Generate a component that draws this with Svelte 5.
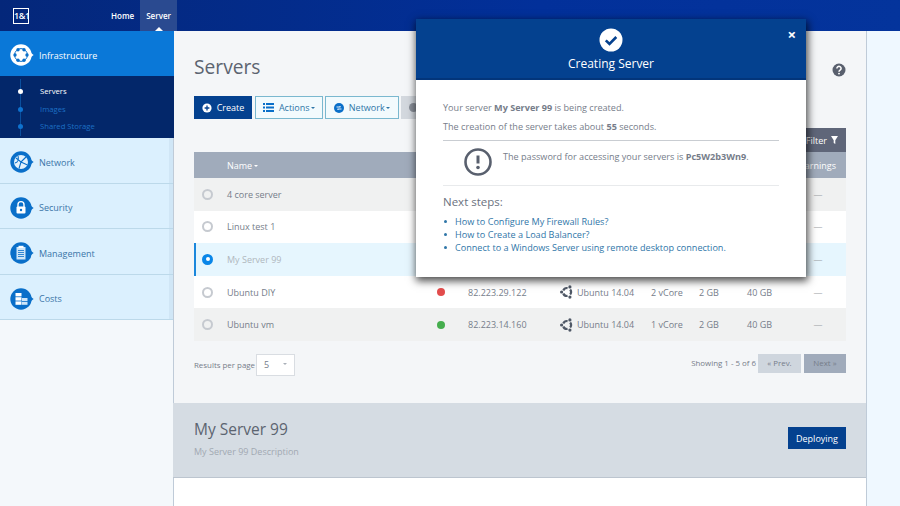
<script lang="ts">
  const navItems = [
    { label: "Network", icon: "network" },
    { label: "Security", icon: "lock" },
    { label: "Management", icon: "clip" },
    { label: "Costs", icon: "costs" },
  ];

  const subItems = [
    { label: "Servers", active: true },
    { label: "Images", active: false },
    { label: "Shared Storage", active: false },
  ];

  const rows = [
    { name: "4 core server", dot: "", ip: "", os: "", cores: "", ram: "", disk: "", state: "" },
    { name: "Linux test 1", dot: "", ip: "", os: "", cores: "", ram: "", disk: "", state: "" },
    { name: "My Server 99", dot: "", ip: "", os: "", cores: "", ram: "", disk: "", state: "selected" },
    { name: "Ubuntu DIY", dot: "red", ip: "82.223.29.122", os: "Ubuntu 14.04", cores: "2 vCore", ram: "2 GB", disk: "40 GB", state: "" },
    { name: "Ubuntu vm", dot: "green", ip: "82.223.14.160", os: "Ubuntu 14.04", cores: "1 vCore", ram: "2 GB", disk: "40 GB", state: "" },
  ];

  const steps = [
    "How to Configure My Firewall Rules?",
    "How to Create a Load Balancer?",
    "Connect to a Windows Server using remote desktop connection.",
  ];
</script>

{#snippet badge(kind: string, active: boolean)}
  <svg class="badge" width="27" height="24" viewBox="0 0 27 24">
    <circle cx="12" cy="12" r="10.7" fill={active ? "#fff" : "#0a6fc9"} />
    <path d="M22 10l2.600 2-2.600 2z" fill={active ? "#fff" : "#0a6fc9"} />
    {#if kind === "infra"}
      <circle cx="12" cy="12" r="6.400" fill="none" stroke="#0a6fc9" stroke-width="1" />
      <g fill="#0a6fc9">
        <circle cx="9" cy="6.800" r="1.700" /><circle cx="15" cy="6.800" r="1.700" />
        <circle cx="6" cy="12" r="1.700" /><circle cx="18" cy="12" r="1.700" />
        <circle cx="9" cy="17.200" r="1.700" /><circle cx="15" cy="17.200" r="1.700" />
      </g>
    {:else if kind === "network"}
      <circle cx="12" cy="12" r="7" fill="#e4f2fc" />
      <path d="M7 8l5 4 5-5M12 12l-2 6.500M12 12l6.500 3M6 13c3-1 4-4 3-7" fill="none" stroke="#0a6fc9" stroke-width="1.100" />
    {:else if kind === "lock"}
      <path d="M9 11V8.600a3 3 0 0 1 6 0V11" fill="none" stroke="#fff" stroke-width="1.400" />
      <rect x="7.500" y="10.500" width="9" height="7" rx="1" fill="#fff" />
      <circle cx="12" cy="14" r="1.200" fill="#0a6fc9" />
    {:else if kind === "clip"}
      <rect x="7.500" y="6" width="9" height="12.500" fill="#cfe6f8" />
      <rect x="9.500" y="4.800" width="5" height="2.200" fill="#fff" />
      <path d="M9 9.500h6M9 11.500h6M9 13.500h6M9 15.500h6" stroke="#0a6fc9" stroke-width=".8" />
    {:else}
      <rect x="6.500" y="6" width="6" height="3.400" fill="#fff" />
      <rect x="6.500" y="10.200" width="6" height="3.400" fill="#fff" />
      <rect x="6.500" y="14.400" width="6" height="3.400" fill="#fff" />
      <rect x="13" y="11" width="5.500" height="3" fill="#cfe6f8" />
      <rect x="13" y="14.800" width="5.500" height="3" fill="#cfe6f8" />
    {/if}
  </svg>
{/snippet}

{#snippet ubuntu()}
  <svg class="ubuntu" width="13" height="14" viewBox="0 0 13 14">
    <path d="M7.560 10.960A4 4 0 0 1 3.290 8.500M3.290 5.500A4 4 0 0 1 7.560 3.040M10.150 4.540A4 4 0 0 1 10.150 9.460" fill="none" stroke="#4f5866" stroke-width="2.200" />
    <circle cx="1.600" cy="7" r="1.600" fill="#4f5866" />
    <circle cx="9.900" cy="1.900" r="1.600" fill="#4f5866" />
    <circle cx="9.900" cy="12.100" r="1.600" fill="#4f5866" />
  </svg>
{/snippet}

<div class="page">
  <header class="topbar">
    <div class="logo-col">
      <div class="logo">1&amp;1</div>
      <nav class="topnav">
        <span class="toplink">Home</span>
        <span class="toplink current">Server</span>
      </nav>
    </div>
  </header>

  <div class="body">
    <aside class="sidebar">
      <div class="nav-active">
        {@render badge("infra", true)}
        <span>Infrastructure</span>
      </div>
      <ul class="subnav">
        {#each subItems as item}
          <li class:active={item.active}>{item.label}</li>
        {/each}
      </ul>
      {#each navItems as item}
        <div class="nav-item">
          {@render badge(item.icon, false)}
          <span>{item.label}</span>
        </div>
      {/each}
    </aside>

    <main class="main">
      <div class="content">
        <div class="title-row">
          <h1>Servers</h1>
          <svg width="14" height="14" viewBox="0 0 14 14" class="help">
            <circle cx="7" cy="7" r="6.500" fill="#59606e" />
            <path d="M4.900 5.400a2.100 2 0 1 1 3.200 1.700c-.8.500-1.100.8-1.100 1.600" fill="none" stroke="#fff" stroke-width="1.500" />
            <circle cx="7" cy="10.600" r=".95" fill="#fff" />
          </svg>
        </div>

        <div class="toolbar">
          <button class="btn primary">
            <svg width="10" height="10" viewBox="0 0 10 10"><circle cx="5" cy="5" r="4.600" fill="#fff" /><path d="M2.600 5h4.800M5 2.600v4.800" stroke="#04418f" stroke-width="1.300" /></svg>
            Create
          </button>
          <button class="btn outline actions">
            <svg width="11" height="9" viewBox="0 0 11 9" fill="#0a6fc9"><rect y="0" width="2" height="2" /><rect y="3.500" width="2" height="2" /><rect y="7" width="2" height="2" /><rect x="3" y="0" width="8" height="2" /><rect x="3" y="3.500" width="8" height="2" /><rect x="3" y="7" width="8" height="2" /></svg>
            <span>Actions<i class="caret"></i></span>
          </button>
          <button class="btn outline network">
            <svg width="10" height="10" viewBox="0 0 10 10"><circle cx="5" cy="5" r="5" fill="#0a6fc9" /><path d="M2.500 4h4l-1-1M7.500 6h-4l1 1" fill="none" stroke="#fff" stroke-width=".9" /></svg>
            <span>Network<i class="caret"></i></span>
          </button>
          <button class="btn muted"><span class="muted-dot"></span></button>
          <button class="btn filter">Filter
            <svg width="7" height="8" viewBox="0 0 7 8" fill="#fff"><path d="M0 0h7L4.300 4.200V8l-1.600-1V4.200z" /></svg>
          </button>
        </div>

        <div class="table">
          <div class="thead">
            <span class="c-name">Name<i class="caret light"></i></span>
            <span class="c-warn">Warnings</span>
          </div>
          {#each rows as row}
            <div class="row" class:selected={row.state === "selected"}>
              <span class="radio"></span>
              <span class="c-name">{row.name}</span>
              <span class="c-dot">{#if row.dot}<i class="dot {row.dot}"></i>{/if}</span>
              <span class="c-ip">{row.ip}</span>
              <span class="c-os">{#if row.os}{@render ubuntu()}{row.os}{/if}</span>
              <span class="c-core">{row.cores}</span>
              <span class="c-ram">{row.ram}</span>
              <span class="c-disk">{row.disk}</span>
              <span class="c-warn">—</span>
            </div>
          {/each}
        </div>

        <div class="pager">
          <span class="per-page">Results per page</span>
          <span class="select">5<i class="caret grey"></i></span>
          <span class="showing">Showing 1 - 5 of 6</span>
          <span class="page-btn">« Prev.</span>
          <span class="page-btn next">Next »</span>
        </div>
      </div>

      <section class="detail">
        <div>
          <h2>My Server 99</h2>
          <p>My Server 99 Description</p>
        </div>
        <button class="btn deploying">Deploying</button>
      </section>
      <div class="blank"></div>
    </main>

    <div class="gutter"></div>
  </div>

  <div class="modal">
    <div class="modal-head">
      <svg width="24" height="24" viewBox="0 0 24 24">
        <circle cx="12" cy="12" r="11.500" fill="#fff" />
        <path d="M6.800 12.300l3.700 3.700 6.800-7" fill="none" stroke="#04418f" stroke-width="2.600" />
      </svg>
      <div class="modal-title">Creating Server</div>
      <span class="close">×</span>
    </div>
    <div class="modal-body">
      <p>Your server <b>My Server 99</b> is being created.</p>
      <p>The creation of the server takes about <b>55</b> seconds.</p>
      <div class="notice">
        <svg width="28" height="28" viewBox="0 0 28 28">
          <circle cx="14" cy="14" r="12.500" fill="none" stroke="#59606e" stroke-width="2.600" />
          <path d="M14 7.500v8" stroke="#59606e" stroke-width="3" />
          <circle cx="14" cy="19.500" r="1.800" fill="#59606e" />
        </svg>
        <span>The password for accessing your servers is <b>Pc5W2b3Wn9</b>.</span>
      </div>
      <h3>Next steps:</h3>
      <ul>
        {#each steps as step}
          <li>{step}</li>
        {/each}
      </ul>
    </div>
  </div>
</div>

<style>
  :global(body) {
    margin: 0;
    font-family: "Open Sans", "Liberation Sans", sans-serif;
    color: #59606e;
  }

  .page {
    position: relative;
    width: 900px;
    height: 506px;
    overflow: hidden;
    display: flex;
    flex-direction: column;
    background: #f4f6f8;
  }

  .topbar {
    height: 31px;
    flex: none;
    background: linear-gradient(90deg, #04277a, #02309a 60%, #04349c);
    color: #fff;
  }

  .logo-col {
    width: 177px;
    height: 100%;
    display: flex;
    align-items: center;
    justify-content: space-between;
    padding-left: 13px;
    box-sizing: border-box;
  }

  .logo {
    width: 14px;
    height: 14px;
    border: 1px solid #fff;
    font-size: 9px;
    font-weight: 600;
    line-height: 14px;
    text-align: center;
    letter-spacing: -0.4px;
  }

  .topnav {
    display: flex;
    height: 100%;
    align-items: center;
  }

  .toplink {
    font-size: 8px;
    font-weight: 600;
    padding: 0 6px;
    line-height: 31px;
    height: 31px;
    position: relative;
  }

  .current {
    background: #2a4a90;
  }

  .current::after {
    content: "";
    position: absolute;
    left: 50%;
    bottom: 0;
    margin-left: -4px;
    border: 4px solid transparent;
    border-top: 0;
    border-bottom-color: #fff;
  }

  .body {
    flex: 1;
    display: flex;
    min-height: 0;
  }

  .sidebar {
    width: 174px;
    flex: none;
    box-sizing: border-box;
    border-right: 1px solid #bfcbd8;
    background: #f4f8fb;
    font-size: 9px;
  }

  .badge {
    margin-right: 3px;
    flex: none;
  }

  .nav-active {
    height: 45px;
    box-sizing: border-box;
    padding: 3px 0 0 9px;
    background: #0a78d8;
    color: #fff;
    display: flex;
    align-items: center;
    margin-right: -1px;
    position: relative;
  }

  .nav-active::after {
    content: "";
    position: absolute;
    left: 15px;
    bottom: -5px;
    border: 5px solid transparent;
    border-bottom: 0;
    border-top-color: #0a78d8;
  }

  .subnav {
    list-style: none;
    margin: 0 -1px 0 0;
    height: 62px;
    box-sizing: border-box;
    padding: 7px 0 0 40px;
    background: #03276a;
    color: #1d6fc4;
    font-size: 7.700px;
    position: relative;
  }

  .subnav::before {
    content: "";
    position: absolute;
    left: 20px;
    top: 3px;
    bottom: 2px;
    width: 1px;
    background: #0a4f9e;
  }

  .subnav li {
    height: 17.500px;
    line-height: 17.500px;
    position: relative;
  }

  .subnav li::before {
    content: "";
    position: absolute;
    left: -22px;
    top: 6px;
    width: 5px;
    height: 5px;
    border-radius: 50%;
    background: #0e72cf;
  }

  .subnav li.active {
    color: #fff;
  }

  .subnav li.active::before {
    background: #fff;
  }

  .nav-item {
    height: 45.500px;
    box-sizing: border-box;
    display: flex;
    align-items: center;
    padding: 4px 0 0 9px;
    background: #dbf0fe;
    border-bottom: 1px solid #bcd9ea;
    color: #3a75a8;
    box-shadow: inset -4px 0 0 #d0e6f6;
  }

  .main {
    width: 692px;
    flex: none;
    display: flex;
    flex-direction: column;
  }

  .content {
    flex: none;
    height: 372px;
    box-sizing: border-box;
    padding: 0 20px;
  }

  .title-row {
    height: 65px;
    display: flex;
    align-items: center;
    justify-content: space-between;
    padding-top: 5px;
    box-sizing: border-box;
  }

  h1 {
    margin: 0;
    font-size: 19.200px;
    font-weight: 400;
    color: #5c6470;
  }

  .help {
    margin: 7px 0 0;
  }

  .toolbar {
    height: 23px;
    display: flex;
    gap: 2px;
    margin-bottom: 33px;
  }

  .btn {
    font: inherit;
    font-size: 9px;
    height: 23px;
    border: 0;
    padding: 0;
    display: inline-flex;
    align-items: center;
    justify-content: center;
    gap: 5px;
    box-sizing: border-box;
  }

  .primary {
    width: 58px;
    margin-right: 1px;
    background: #04418f;
    color: #fff;
  }

  .outline {
    background: #f2fafd;
    border: 1px solid #7ab8cf;
    color: #2f76a8;
  }

  .actions {
    width: 68px;
  }

  .network {
    width: 74px;
  }

  .muted {
    width: 60px;
    background: #d3d8de;
    justify-content: flex-start;
    padding-left: 8px;
  }

  .muted-dot {
    width: 9px;
    height: 9px;
    border-radius: 50%;
    background: #8a909a;
  }

  .filter {
    margin-left: auto;
    width: 75px;
    margin-top: 32px;
    height: 24px;
    background: #5f6679;
    color: #fff;
    justify-content: flex-end;
    padding-right: 8px;
    gap: 4px;
  }

  .caret {
    display: inline-block;
    border: 2.500px solid transparent;
    border-bottom: 0;
    border-top-color: #2f76a8;
    margin: 0 0 1px 1.500px;
    vertical-align: middle;
  }

  .caret.light {
    border-top-color: #fff;
  }

  .caret.grey {
    border-top-color: #a9afb8;
    margin-left: 14px;
  }

  .table {
    font-size: 9px;
  }

  .thead {
    height: 26px;
    background: #a0abbb;
    color: #fff;
    display: flex;
    align-items: center;
    padding-left: 33px;
  }

  .thead .c-warn {
    margin-left: auto;
    width: 54px;
    text-align: right;
    padding-right: 10px;
    box-sizing: border-box;
    color: #fff;
  }

  .row {
    height: 32.600px;
    display: grid;
    grid-template-columns: 33px 210px 31px 92px 91px 48px 48px 48px 1fr;
    align-items: center;
    background: #fff;
    color: #767d8a;
  }

  .row:nth-child(even) {
    background: #f0f1f1;
  }

  .row.selected {
    background: #e6f6fe;
    box-shadow: inset 2px 0 0 #1b87dc;
    color: #b0b6bd;
  }

  .radio {
    justify-self: start;
    box-sizing: border-box;
    margin-left: 8px;
    width: 11px;
    height: 11px;
    border: 2px solid #c6cad0;
    border-radius: 50%;
    position: relative;
  }

  .selected .radio {
    border-color: #0a86e8;
    background: #0a86e8;
  }

  .selected .radio::after {
    content: "";
    position: absolute;
    inset: 1.500px;
    border-radius: 50%;
    background: #fff;
  }

  .c-dot {
    display: flex;
    align-items: center;
  }

  .dot {
    width: 8px;
    height: 8px;
    border-radius: 50%;
  }

  .dot.red {
    background: #e34c4c;
  }

  .dot.green {
    background: #46ae4e;
  }

  .c-os {
    display: flex;
    align-items: center;
    gap: 4px;
  }

  .c-warn {
    color: #9a9ea6;
    text-align: center;
    padding-right: 5px;
  }

  .pager {
    display: flex;
    align-items: center;
    margin-top: 13px;
    font-size: 7.900px;
    color: #767d8a;
  }

  .per-page {
    margin-right: 1px;
  }

  .select {
    width: 39px;
    height: 22px;
    box-sizing: border-box;
    background: #fff;
    border: 1px solid #d9dde2;
    display: flex;
    align-items: center;
    padding-left: 7px;
    font-size: 9px;
  }

  .showing {
    margin-left: auto;
    margin-right: 2px;
    align-self: flex-start;
    line-height: 19px;
  }

  .page-btn {
    width: 43px;
    height: 19px;
    line-height: 19px;
    text-align: center;
    align-self: flex-start;
    background: #cfd6de;
    color: #767d8a;
  }

  .next {
    margin-left: 3px;
    width: 42px;
    background: #a0abbb;
  }

  .detail {
    height: 75px;
    flex: none;
    margin-left: -1px;
    box-sizing: border-box;
    background: #d5dce3;
    border-bottom: 1px solid #bcc5cf;
    display: flex;
    align-items: center;
    justify-content: space-between;
    padding: 0 20px 4px 21px;
  }

  h2 {
    margin: 0 0 6px;
    font-size: 15.500px;
    font-weight: 400;
    line-height: 20px;
    color: #5c6470;
  }

  .detail p {
    margin: 0;
    font-size: 9px;
    color: #a2a9b2;
  }

  .deploying {
    width: 58px;
    height: 22px;
    background: #04418f;
    color: #fff;
  }

  .blank {
    flex: 1;
    background: #fff;
  }

  .gutter {
    flex: 1;
    background: #eff8ff;
    border-left: 1px solid #bfcbd8;
  }

  .modal {
    position: absolute;
    left: 416px;
    top: 19px;
    width: 390px;
    height: 258px;
    background: #fff;
    box-shadow: 1px 3px 8px 1px rgba(0, 0, 0, 0.7);
  }

  .modal-head {
    height: 61px;
    box-sizing: border-box;
    background: #04418f;
    border-bottom: 2px solid #03357a;
    color: #fff;
    text-align: center;
    padding-top: 9px;
    position: relative;
  }

  .modal-head svg {
    display: block;
    margin: 0 auto;
  }

  .modal-title {
    font-size: 12px;
    margin-top: 3px;
  }

  .close {
    position: absolute;
    right: 10px;
    top: 5px;
    font-size: 15px;
    font-weight: 700;
    line-height: 20px;
  }

  .modal-body {
    padding: 22px 27px 0;
    font-size: 9.100px;
    color: #767d8a;
  }

  .modal-body p {
    margin: 0 0 7px;
    line-height: 12px;
  }

  .notice {
    height: 46px;
    box-sizing: border-box;
    border-top: 1px solid #c9cdd2;
    border-bottom: 1px solid #e8eaec;
    display: flex;
    align-items: flex-start;
    padding: 8px 0 0 21px;
    gap: 11px;
    margin-top: 6px;
  }

  .notice svg {
    margin-top: -1px;
  }

  .notice span {
    line-height: 16px;
  }

  h3 {
    margin: 9px 0 6px;
    font-size: 11.500px;
    font-weight: 400;
    line-height: 14px;
    color: #6b7280;
  }

  .modal-body ul {
    margin: 0;
    padding: 0 0 0 12px;
    list-style: none;
    color: #2f76a8;
  }

  .modal-body li {
    line-height: 13px;
    position: relative;
  }

  .modal-body li::before {
    content: "";
    position: absolute;
    left: -11px;
    top: 5px;
    width: 3px;
    height: 3px;
    border-radius: 50%;
    background: #2f76a8;
  }
</style>
